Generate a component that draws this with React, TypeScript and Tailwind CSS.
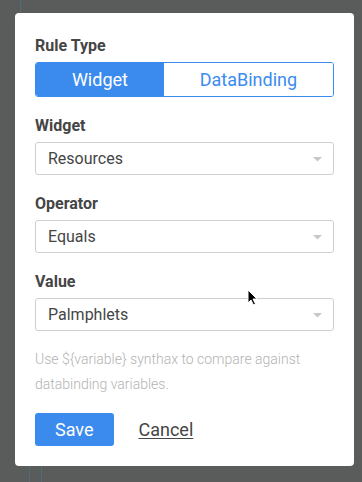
import { useState } from "react";

type Tab = "widget" | "databinding";

const helpText = "Use ${variable} synthax to compare against databinding variables.";

function Chevron() {
  return (
    <svg width="9" height="5" viewBox="0 0 9 5" className="absolute right-[11px] top-[14px]" aria-hidden>
      <path d="M0 0h9L4.5 4.5z" fill="#c8c8c8" />
    </svg>
  );
}

function Field({ label, value }: { label: string; value: string }) {
  return (
    <div className="mt-[16.5px]">
      <label className="mb-[4.5px] block text-base font-bold leading-6 text-[#454545]">{label}</label>
      <div className="relative h-[33px] rounded-[3px] border border-[#cfcfcf] bg-white pl-3 text-base leading-[31px] text-[#454545]">
        {value}
        <Chevron />
      </div>
    </div>
  );
}

export default function App() {
  const [tab, setTab] = useState<Tab>("widget");

  return (
    <div
      className="relative h-[482px] w-[362px] overflow-hidden bg-[#5a5b5b] pt-[13px] pl-[15px]"
      style={{ fontFamily: "Roboto, 'Liberation Sans', sans-serif" }}
    >
      {/* faint page behind the overlay */}
      <div className="absolute left-[20px] top-0 h-[13px] w-px bg-[#4e6b78]" />
      <div className="absolute left-[29px] bottom-0 h-[16px] w-px bg-[#4e6b78]" />
      <div className="absolute left-[41px] bottom-0 h-[16px] w-px bg-[#4e6b78]" />

      <div className="w-[339px] rounded-[4px] bg-white px-5 pt-[21px] pb-5">
        <label className="mb-1 block text-base font-bold leading-6 text-[#454545]">Rule Type</label>
        <div className="flex h-[35px] overflow-hidden rounded-[3px] border border-[#3b8bef]">
          <button
            onClick={() => setTab("widget")}
            className={`flex-auto text-[18px] ${tab === "widget" ? "bg-[#3b8bef] text-white" : "bg-white text-[#3b8bef]"}`}
          >
            Widget
          </button>
          <button
            onClick={() => setTab("databinding")}
            className={`flex-auto text-[18px] ${tab === "databinding" ? "bg-[#3b8bef] text-white" : "bg-white text-[#3b8bef]"}`}
          >
            DataBinding
          </button>
        </div>

        <Field label="Widget" value="Resources" />
        <Field label="Operator" value="Equals" />
        <Field label="Value" value="Palmphlets" />

        <p className="mt-4 text-sm font-light leading-[25px] text-[#b3b3b3]">{helpText}</p>

        <div className="mt-4 flex items-center gap-[25px]">
          <button className="h-[33px] rounded-[3px] bg-[#3b8bef] px-5 text-[18px] text-white">Save</button>
          <button className="text-[18px] text-[#454545] underline underline-offset-2">Cancel</button>
        </div>
      </div>

      {/* mouse pointer */}
      <svg width="12" height="17" viewBox="0 0 12 17" className="absolute left-[247px] top-[289px]" aria-hidden>
        <path d="M1 1v13l3-3 2.5 5 2-1-2.5-5H10z" fill="#000" stroke="#fff" strokeWidth="1" />
      </svg>
    </div>
  );
}
